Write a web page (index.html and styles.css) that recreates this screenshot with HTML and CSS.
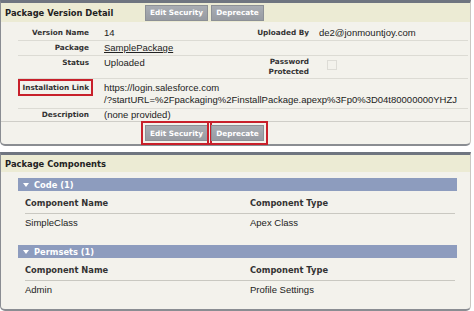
FILE: index.html
```html
<!DOCTYPE html>
<html>
<head>
<meta charset="utf-8">
<link rel="stylesheet" href="styles.css">
</head>
<body>
<div class="page">
  <section class="panel detail-panel">
    <div class="phead">
      <h2 class="ptitle">Package Version Detail</h2>
      <div class="btns">
        <span class="btn btn-edit">Edit Security</span>
        <span class="btn btn-dep">Deprecate</span>
      </div>
    </div>
    <div class="detail">
      <div class="lbl">Version Name</div>
      <div class="val">14</div>
      <div class="lbl lbl2">Uploaded By</div>
      <div class="val val2">de2@jonmountjoy.com</div>

      <div class="lbl">Package</div>
      <div class="val"><span class="link">SamplePackage</span></div>
      <div class="lbl lbl2"></div>
      <div class="val val2"></div>

      <div class="lbl">Status</div>
      <div class="val">Uploaded</div>
      <div class="lbl lbl2 twoline">Password<br>Protected</div>
      <div class="val val2"><span class="chk"></span></div>

      <div class="lbl tall"><span class="mark">Installation Link</span></div>
      <div class="val wide tall">https://login.salesforce.com<br>/?startURL=%2Fpackaging%2FinstallPackage.apexp%3Fp0%3D04t80000000YHZJ</div>

      <div class="lbl last">Description</div>
      <div class="val wide last">(none provided)</div>
    </div>
    <div class="pfoot">
      <span class="btn btn-edit marked">Edit Security</span>
      <span class="btn btn-dep marked">Deprecate</span>
    </div>
  </section>

  <section class="panel comp-panel">
    <div class="phead small">
      <h2 class="ptitle">Package Components</h2>
    </div>
    <div class="group">
      <div class="gbar"><span class="tri"></span>Code (1)</div>
      <div class="ctable">
        <div class="crow chead"><span class="c1">Component Name</span><span class="c2">Component Type</span></div>
        <div class="crow"><span class="c1">SimpleClass</span><span class="c2">Apex Class</span></div>
      </div>
    </div>
    <div class="group">
      <div class="gbar"><span class="tri"></span>Permsets (1)</div>
      <div class="ctable">
        <div class="crow chead"><span class="c1">Component Name</span><span class="c2">Component Type</span></div>
        <div class="crow"><span class="c1">Admin</span><span class="c2">Profile Settings</span></div>
      </div>
    </div>
  </section>
</div>
</body>
</html>
```

FILE: styles.css
```css
* { box-sizing: border-box; }
html, body { margin: 0; padding: 0; background: #ffffff; }
body { width: 474px; height: 311px; overflow: hidden; font-family: "Liberation Sans", Arial, sans-serif; color: #222; }

.page { display: flex; flex-direction: column; gap: 6px; width: 471px; }

.panel {
  background: #f3f2ec;
  border-top: 3px solid #6f7580;
  border-right: 1px solid #c9c8c2;
  border-bottom: 2px solid #8a8d92;
  border-left: 1px solid #8a8d92;
  border-radius: 0 0 5px 5px;
}

.phead {
  display: flex;
  align-items: center;
  height: 19px;
  background: #ecebd4;
}
.phead.small { height: 17px; }
.ptitle {
  margin: 0;
  width: 144px;
  padding-left: 4px;
  font-family: "DejaVu Sans", Verdana, sans-serif;
  font-weight: bold;
  font-size: 8.35px;
  color: #222;
  white-space: nowrap;
}
.btns { display: flex; gap: 3px; }
.btn {
  display: inline-flex;
  align-items: center;
  justify-content: center;
  height: 16px;
  background: linear-gradient(#a9adb3, #979ba2);
  border: 1px solid #8c9096;
  color: #fff;
  font-family: "DejaVu Sans", Verdana, sans-serif;
  font-weight: bold;
  font-size: 7.3px;
}
.btn-edit { width: 63px; }
.btn-dep { width: 53px; }

.detail {
  display: grid;
  grid-template-columns: 79px 143px 77px 1fr;
  margin: 4px 2px 0 17px;
}
.lbl, .val {
  line-height: 12px;
  padding: 1px 0 1px;
  border-bottom: 1px solid #dcdbd4;
}
.lbl {
  text-align: right;
  padding-right: 8px;
  font-family: "DejaVu Sans", Verdana, sans-serif;
  font-weight: bold;
  font-size: 7.3px;
  color: #333;
}
.lbl2 { padding-right: 8px; }
.twoline { line-height: 10px; }
.val { padding-left: 7px; font-size: 9.5px; }
.val2 { padding-left: 2px; }
.wide { grid-column: 2 / 5; }
.tall { padding-top: 3px; padding-bottom: 2px; }
.last { border-bottom: none; padding-top: 0; padding-bottom: 0; }
.link { text-decoration: underline; color: #222; }
.chk {
  display: inline-block;
  width: 10px;
  height: 10px;
  margin: 3px 0 0 8px;
  border: 1px solid #dddcd6;
  background: #f3f2ec;
}
.mark {
  outline: 2px solid #c8202b;
  outline-offset: 2px;
}

.pfoot {
  display: flex;
  gap: 3px;
  padding: 3px 0 3px 144px;
  border-top: 1px solid #cfcec8;
}
.marked {
  outline: 2px solid #c8202b;
  outline-offset: 2px;
}

.group { margin: 6px 13px 0 17px; }
.group + .group { margin-top: 13px; }
.comp-panel { padding-bottom: 10px; }
.gbar {
  display: flex;
  align-items: center;
  height: 13px;
  background: #8d9cbe;
  color: #fff;
  font-family: "DejaVu Sans", Verdana, sans-serif;
  font-weight: bold;
  font-size: 8.3px;
  padding-left: 5px;
}
.tri {
  width: 0; height: 0;
  border-left: 3px solid transparent;
  border-right: 3px solid transparent;
  border-top: 4px solid #fff;
  margin-right: 5px;
}
.ctable { margin: 0 2px 0 7px; }
.crow {
  display: grid;
  grid-template-columns: 225px 1fr;
  line-height: 12px;
  padding: 3px 0;
  font-size: 9.5px;
}
.chead {
  padding: 6px 0 4px;
  border-bottom: 1px solid #c9c8c1;
  font-family: "DejaVu Sans", Verdana, sans-serif;
  font-weight: bold;
  font-size: 8.3px;
  color: #333;
}
```
